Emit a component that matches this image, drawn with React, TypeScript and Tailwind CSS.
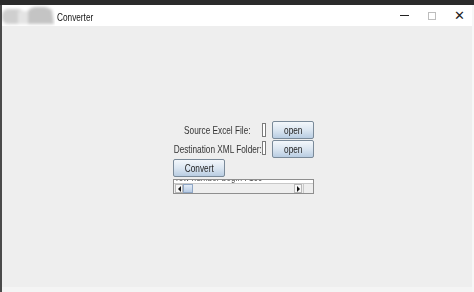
import React from "react";

const btn =
  "flex items-center justify-center rounded-[2px] border border-[#7a8a99] bg-gradient-to-b from-[#f3f7fb] via-[#dbe6f1] to-[#b9cde2] text-[11px] text-[#222]";

function T({ children, className = "" }: { children: React.ReactNode; className?: string }) {
  return (
    <span className={"inline-block shrink-0 whitespace-nowrap scale-x-[0.75] " + className}>
      {children}
    </span>
  );
}

export default function App() {
  return (
    <div
      className="flex h-[292px] w-[474px] flex-col overflow-hidden bg-[#2b2b2b]"
      style={{ fontFamily: '"Liberation Sans", Arial, sans-serif' }}
    >
      <div className="h-[5px] shrink-0 bg-[#2b2b2b]" />
      <div className="flex min-h-0 flex-1">
        <div className="w-[2px] shrink-0 bg-[#4a4a4a]" />
        <div className="flex min-w-0 flex-1 flex-col bg-white">
          {/* title bar */}
          <div className="flex h-[21px] shrink-0 items-center bg-white">
            <svg width="53" height="21" viewBox="0 0 53 21" className="shrink-0">
              <defs>
                <filter id="b" x="-20%" y="-50%" width="140%" height="200%">
                  <feGaussianBlur stdDeviation="1.6" />
                </filter>
              </defs>
              <g filter="url(#b)">
                <rect x="0" y="4" width="22" height="15" rx="6" fill="#cfcfcf" />
                <rect x="16" y="6" width="12" height="13" fill="#e4e4e4" />
                <path d="M26 19 L26 6 Q30 1 38 2 Q44 1 50 5 L52 19 Z" fill="#c4c4c4" />
              </g>
            </svg>
            <div className="ml-[2px] w-[60px] overflow-visible">
              <T className="origin-left text-[11px] text-[#111]">Converter</T>
            </div>
            <div className="flex-1" />
            <div className="flex w-[28px] justify-center">
              <div className="h-px w-[9px] bg-[#222]" />
            </div>
            <div className="flex w-[28px] justify-center">
              <div className="h-[8px] w-[8px] border border-[#bdbdbd]" />
            </div>
            <div className="flex w-[26px] justify-center text-[13px] leading-none text-[#222]">
              ✕
            </div>
          </div>
          {/* content */}
          <div className="flex min-h-0 flex-1 flex-col bg-[#eeeeee] pl-[171px] pt-[95px] text-[11px] text-[#333]">
            <div className="flex h-[18px] items-center">
              <div className="flex w-[89px] justify-center">
                <T>Source Excel File:</T>
              </div>
              <div className="h-[14px] w-[4px] border border-[#7a7a7a] bg-white" />
              <div className={btn + " ml-[6px] h-[18px] w-[42px]"}>
                <T>open</T>
              </div>
            </div>
            <div className="mt-px flex h-[18px] items-center">
              <div className="flex w-[89px] justify-center">
                <T>Destination XML Folder:</T>
              </div>
              <div className="-mt-[3px] h-[14px] w-[4px] border border-[#7a7a7a] bg-white" />
              <div className={btn + " ml-[6px] h-[18px] w-[42px]"}>
                <T>open</T>
              </div>
            </div>
            <div className={btn + " mt-[1px] h-[18px] w-[52px]"}>
              <T>Convert</T>
            </div>
            <div className="mt-[2px] flex h-[15px] w-[141px] flex-col border border-[#8e8e8e] bg-white">
              <div className="relative h-[3px] overflow-hidden">
                <div className="absolute left-[2px] top-[-9px] leading-[12px] text-[#555]">
                  <T className="origin-left text-[11px]">row number begin : 109</T>
                </div>
              </div>
              <div className="flex h-[10px] border-t border-[#c8c8c8]">
                <div className="flex w-[129px] items-center bg-[#eeeeee] px-[1px]">
                  <div className="flex h-[9px] w-[8px] items-center justify-center border border-[#b8b8b8] bg-[#f7f7f7]">
                    <div className="h-0 w-0 border-y-[3px] border-r-[3px] border-y-transparent border-r-[#111]" />
                  </div>
                  <div className="h-[9px] w-[10px] border border-[#8fa6c4] bg-gradient-to-b from-[#e3ecf7] to-[#b7cbe4]" />
                  <div className="flex-1" />
                  <div className="flex h-[9px] w-[8px] items-center justify-center border border-[#b8b8b8] bg-[#f7f7f7]">
                    <div className="h-0 w-0 border-y-[3px] border-l-[3px] border-y-transparent border-l-[#111]" />
                  </div>
                </div>
                <div className="flex-1 border-l border-[#c8c8c8] bg-[#eeeeee]" />
              </div>
            </div>
          </div>
          <div className="h-[5px] shrink-0 bg-[#f4f4f4]" />
        </div>
        <div className="w-[2px] shrink-0 bg-[#f7f7f7]" />
      </div>
    </div>
  );
}
